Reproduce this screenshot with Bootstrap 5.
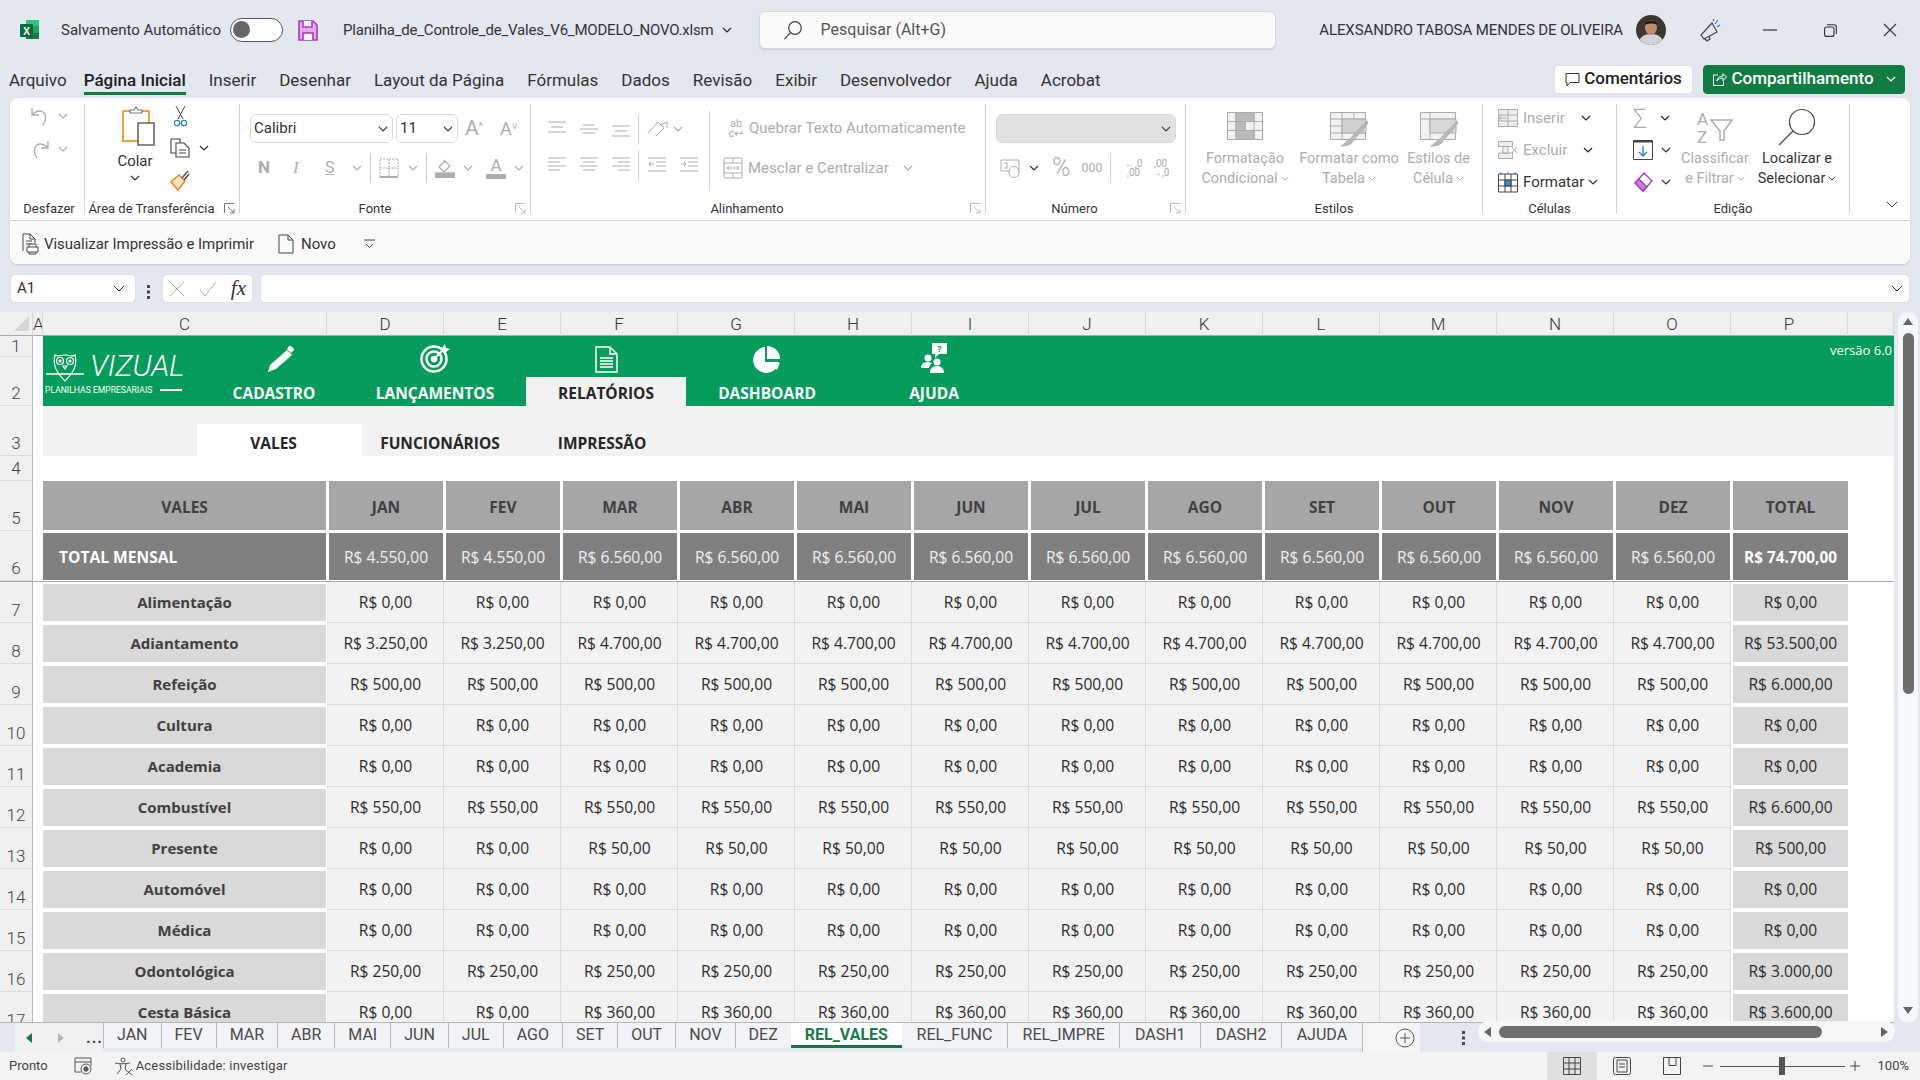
<!DOCTYPE html>
<html lang="pt-BR"><head><meta charset="utf-8"><title>Excel</title>
<link href="https://cdn.jsdelivr.net/npm/bootstrap@5.3.0/dist/css/bootstrap.min.css" rel="stylesheet">
<style>
html,body{height:100%;overflow:hidden}
body{background:#e3e7f0;font-family:Roboto,"Liberation Sans",sans-serif;color:#333;width:1920px;height:1080px}
svg{display:block;flex:none}
.cv{width:10px;height:6px;flex:none}
.dis{color:#adadad}
.titlebar{height:60px;font-size:15px}
.tb-xl{margin-left:20px}.tb-auto{margin-left:21px}
.toggle{width:53px;height:24px;margin-left:9px;border:1.5px solid #555;background:#fff;padding:2px}
.toggle i{width:17px;height:17px;background:#666;display:block}
.tb-save{margin-left:15px}.tb-file{margin-left:25px;font-size:15px;letter-spacing:-.2px}
.search{width:517px;height:38px;margin-left:27px;background:#fafafa;border:1px solid #d4d7de;font-size:16px;color:#555;padding:0 0 0 23px;gap:18px;box-shadow:0 1px 1px #c9ccd3;margin-top:-1px}
.user{margin-left:auto;font-size:15px;letter-spacing:-.1px}
.wbtn{width:60px;justify-content:center}
.tabrow{height:38px;padding-left:9px;font-size:17px;gap:23px}
.tabrow a{color:#333;text-decoration:none;padding:0;line-height:36px;margin-top:2px}
.tabrow a.on{font-weight:500;color:#1e1e1e;border-bottom:3px solid #107c41;line-height:40px;height:35px;margin:0 0 0 -6px;align-self:flex-start}
.btn-com,.btn-share{height:29px;font-size:17px;font-weight:500;padding:0;border-radius:4px}
.btn-com{width:139px;background:#fff;border:1px solid #dfe1e6;color:#222}
.btn-share{width:202px;background:#107c41;border:1px solid #107c41;color:#fff;margin:0 15px 0 10px}
.ribbon{height:166px;margin:0 10px;background:#fff;border-radius:8px;box-shadow:0 1px 2px #bfc3cb;overflow:hidden}
.rib-top{height:123px;padding-top:6px;border-bottom:1px solid #cfcfcf}
.g{flex:none;height:110px;border-right:1px solid #d2d2d2;position:relative;display:flex;flex-direction:column}
.g1{width:75px}.g2{width:155px}.g3{width:291px}.g4{width:455px}.g5{width:200px}.g6{width:297px}.g7{width:134px}.g8{width:233px}
.gb{height:92px;display:flex;flex:none}
.gl{height:18px;font-size:13px;color:#333;line-height:18px;text-align:center;white-space:nowrap;display:flex;justify-content:center;margin-top:4px}
.launch{position:absolute;right:4px;bottom:0;width:11px;height:11px;color:#777}
.stack{display:flex;flex-direction:column;gap:12px;padding-top:2px}
.stack>div{height:20px;display:flex;align-items:center}
.colar{width:70px;margin-left:15px;padding-top:2px;font-size:15px;line-height:20px}
.rows2{display:flex;flex-direction:column;padding-top:10px}
.r1{height:29px;display:flex;align-items:center}.r2{height:26px;margin-top:12px;display:flex;align-items:center}
.fs{height:29px;font-size:15px;padding:0 0 0 3px;border:1px solid #d9d9d9;border-radius:6px;background-position:right 4px center;background-size:10px 10px;color:#333}
.fs1{width:143px;margin-left:10px}.fs2{width:62px;margin-left:3px}
.fsd{width:180px;margin-left:10px;opacity:.5}
.form-select.fsd:disabled{background-color:#e2e2e2}
.vs{width:1px;height:30px;background:#d2d2d2;flex:none}
.ri{display:flex;flex:none}
.big{display:flex;flex-direction:column;align-items:center;padding-top:8px;font-size:14.5px;line-height:20px;white-space:nowrap;flex:none}
.big .txt{margin-top:9px;text-align:center}
.big .cv{display:inline-block;margin-left:3px;vertical-align:2px;width:8px;height:5px}
.st{font-size:15px;margin-left:5px;white-space:nowrap}
.qat{height:43px;background:#fafafa;font-size:15px;padding:3px 0 0 12px;color:#333}
.fbar{height:48px;padding-top:10px}
.fb-box{height:29px;background:#fff;border-radius:5px;border:1px solid #dde0e6}
.namebox{width:126px;margin-left:10px;font-size:15px;padding:0 10px 0 6px}
.fnbox{width:91px;padding:0 6px;margin-left:7px}
.finput{width:1650px;margin-left:7px;color:#444;padding-right:6px}
.mainrow{height:711px}
.sheetwrap{width:1894px;height:711px;overflow:hidden;background:#fff;border-bottom:1px solid #b5b5b5}
.sheet{width:1894px;table-layout:fixed;border-collapse:separate;border-spacing:0;margin:0;color:#333}
.sheet.table th,.sheet.table td{padding:0;border:0;background:transparent;box-shadow:none;text-align:center;vertical-align:middle;white-space:nowrap;line-height:20px;overflow:hidden;color:inherit}
.sheet col.cw0{width:33px}.sheet col.cw1{width:10px}.sheet col.cw2{width:284px}.sheet col.cw{width:117px}
.sheet.table thead th{height:24px;font-family:Roboto,sans-serif;font-weight:300;font-size:17px;color:#333;background:#f0f0f0;border-right:1px solid #d8d8d8;border-bottom:1px solid #aaa}
.sheet.table th.n{background:#f0f0f0;color:#444;font-family:Roboto,sans-serif;font-weight:300;font-size:17px;border-right:1px solid #b5b5b5;border-bottom:1px solid #dcdcdc;vertical-align:bottom;padding-bottom:2px}
.h21{height:21px}.h49{height:49px}.h50{height:50px}.h25{height:25px}.h41{height:41px}
.sheet.table th.n.t0{padding-bottom:0}
.sheet.table td.ban{background:#049c5a;color:#fff;vertical-align:top;text-align:left}
.ban-in{height:70px;display:flex;align-items:stretch}
.logo{width:151px;flex:none;color:#fff;padding:16px 0 0 3px}
.vz{font-style:italic;font-weight:300;font-size:30px;line-height:28px;margin-left:6px;letter-spacing:-.2px}
.pe{font-size:8.6px;line-height:10px;margin-top:3px;margin-left:-1px}
.mi{width:160px;flex:none;display:flex;flex-direction:column;align-items:center}
.mi .top{height:41px;display:flex;align-items:flex-end;padding-bottom:4px;flex:none}
.mi .lbl{height:29px;width:100%;text-align:center;font-family:"Open Sans",sans-serif;font-weight:700;font-size:15.5px;line-height:33px;flex:none}
.mi.act .lbl{background:#f2f2f2;color:#262626}
.mi2{margin-left:1px}.mi3{margin-left:11px}.mi4{margin-left:1px}.mi5{margin-left:7px}
.ver{margin-left:auto;font-family:"Open Sans",sans-serif;font-size:13px;padding:4px 2px 0 0}
.sheet.table td.band{background:#f2f2f2;vertical-align:bottom;text-align:left}
.band-in{height:50px;display:flex;align-items:flex-end;padding-left:154px;font-family:"Open Sans",sans-serif;font-weight:700;font-size:15.5px;color:#262626}
.band-in div{height:32px;line-height:38px;text-align:center;flex:none}
.b1{width:165px;background:#fff;padding-right:12px}.b2{width:156px}.b3{width:168px}
.sheet.table td.hd,.sheet.table td.tm,.sheet.table th.lb,.sheet.table td.tt,.sheet.table td.tb{border-left:2px solid #fff;border-right:1px solid #fff;border-top:2px solid #fff;border-bottom:1px solid #fff;background-clip:padding-box;font-family:"Open Sans",sans-serif}
.sheet.table td.hd{background:#a6a6a6;color:#404040;font-weight:700;font-size:15.5px;padding-top:3px;border-top:0}
.sheet.table td.tm{background:#808080;color:#f0f0f0;font-size:15.6px}
.sheet.table td.tb{background:#808080;color:#fff;font-weight:700;font-size:15.3px}
.sheet.table td.tml{text-align:left;padding-left:16px;color:#fff;font-weight:700;font-size:15.6px}
.sheet.table td.cl{border-left:0}
.sheet.table th.lb{background:#d9d9d9;color:#404040;font-weight:700;font-size:15px;border-left:0;border-top:2px solid #fff;border-bottom:2px solid #fff;padding-bottom:1px}
.sheet.table td.d{background:#f2f2f2;color:#2c2c2c;font-family:"Open Sans",sans-serif;font-size:15.6px;border-right:1px solid #dcdcdc;border-bottom:1px solid #dcdcdc;padding-left:1px}
.sheet.table td.tt{background:#d9d9d9;color:#2c2c2c;font-size:15.6px;border-bottom:2px solid #fff;padding-bottom:1px}
.sheet.table td.tt,.sheet.table td.tb,.sheet.table td.hd.tot{border-right:0}
.frz td{height:1px;background:#aaa!important;line-height:1px!important;font-size:0}
.corner{width:0;height:0;border-left:15px solid transparent;border-bottom:15px solid #d6d6d6;margin:0 0 0 14px}
.vscroll{width:26px;padding:0 2px 0 4px;height:711px}
.vs-in{height:100%;background:#f6f7f9;border-radius:10px;padding-top:21px;position:relative}
.thumbv{width:11px;height:361px;background:#6e6e6e;border-radius:6px;margin:0 auto}
.arr{position:absolute;left:5px;width:0;height:0;border-left:5px solid transparent;border-right:5px solid transparent}
.arr.up{top:6px;border-bottom:7px solid #666}.arr.dn{bottom:9px;border-top:7px solid #666}
.tabbar{height:29px;font-size:16px;color:#444}
.tb-left{margin-left:15px;width:88px;height:29px;background:#f1f1f3;padding-left:11px;gap:26px}
.sh{height:25px;line-height:24px;padding:0 13px;background:#f1f3f6;border-left:1.5px solid #b8b8b8;flex:none;color:#4a4a4a}
.sh.w{padding:0 14.6px}
.sh.on{background:#fff;color:#1b7a4b;font-weight:700;border-left:0;border-right:0;border-bottom:3px solid #1f7246;line-height:23px;padding:0 14px}
.sh.af{border-left:0}
.tb-add{width:58px;height:29px;background:#f5f5f5;border-left:1.5px solid #b8b8b8;justify-content:center;padding-left:28px}
.hs{width:417px;height:21px;margin-left:auto;margin-right:25px;background:#f6f7f9;border-radius:10px;padding:0 7px 0 6px;margin-top:-2px}
.thumbh{width:323px;height:12px;background:#6e6e6e;border-radius:6px;margin-left:8px}
.tri{width:0;height:0;border-top:5px solid transparent;border-bottom:5px solid transparent;flex:none}
.status{height:28px;background:#f3f3f3;font-size:13px;color:#444}
.v-on{width:50px;height:28px;background:#e0e0e0;justify-content:center}
.v-b{width:50px;height:28px;justify-content:center}
</style></head>
<body class="d-flex flex-column">
<svg width="0" height="0" class="position-absolute"><defs>
<symbol id="cv" viewBox="0 0 10 6"><path d="M1 1l4 4 4-4" fill="none" stroke="currentColor" stroke-width="1.2"/></symbol>
</defs></svg>

<header class="titlebar d-flex align-items-center">
<svg class="tb-xl" width="20" height="22" viewBox="0 0 20 22"><path fill="#33c481" d="M6 1h12a1 1 0 0 1 1 1v5H6z"/><path fill="#21a366" d="M6 7h13v7H6z"/><path fill="#107c41" d="M6 14h13v5a1 1 0 0 1-1 1H6z"/><rect y="5" width="13" height="13" rx="1" fill="#0e6b38"/><text x="6.5" y="15.5" text-anchor="middle" font-family="Liberation Sans" font-weight="700" font-size="10" fill="#fff">X</text></svg>
<span class="tb-auto">Salvamento Automático</span>
<div class="toggle rounded-pill"><i class="rounded-circle"></i></div>
<svg class="tb-save" width="20" height="21" viewBox="0 0 20 21"><path d="M1 1h14l4 4v15H1z" fill="#e7a7ec" stroke="#a63bb8" stroke-width="1.6"/><path d="M5 1v6h9V1M5 20v-7h10v7" fill="#fff" stroke="#a63bb8" stroke-width="1.6"/></svg>
<span class="tb-file">Planilha_de_Controle_de_Vales_V6_MODELO_NOVO.xlsm</span>
<svg class="cv ms-2 text-dark" viewBox="0 0 10 6"><use href="#cv"/></svg>
<div class="search rounded d-flex align-items-center"><svg width="20" height="20" viewBox="0 0 20 20" fill="none" stroke="#444" stroke-width="1.2"><circle cx="12" cy="8" r="6.3"/><path d="M7.6 12.6 1.5 19"/></svg><span>Pesquisar (Alt+G)</span></div>
<span class="user">ALEXSANDRO TABOSA MENDES DE OLIVEIRA</span>
<svg style="margin-left:13px" width="30" height="30" viewBox="0 0 30 30"><defs><clipPath id="av"><circle cx="15" cy="15" r="15"/></clipPath></defs><g clip-path="url(#av)"><rect width="30" height="30" fill="#3e352e"/><path d="M2 30c1-8 6-11 13-11s12 3 13 11z" fill="#cdd2dc"/><ellipse cx="15" cy="12.5" rx="6" ry="7.500" fill="#c08d6c"/><path d="M9 10c0-6 12-6 12 0-3-2-8-2-12 0z" fill="#1e1713"/></g></svg>
<svg style="margin-left:33px" width="22" height="24" viewBox="0 0 22 24" fill="none" stroke="#444" stroke-width="1.2"><path d="M13 5 2 17l3 4 13-7zM6 21l2 2 3-2-1-3"/><path d="M16 6l3-4M18 9l3-2M14 3l1-2" stroke="#2f7fc1"/></svg>
<div class="wbtn d-flex align-items-center" style="margin-left:19px"><svg width="14" height="2" viewBox="0 0 14 2"><path d="M0 1h14" stroke="#333" stroke-width="1.2"/></svg></div>
<div class="wbtn d-flex align-items-center"><svg width="13" height="13" viewBox="0 0 13 13" fill="none" stroke="#333" stroke-width="1.1"><rect x=".6" y="3" width="9.4" height="9.4" rx="2"/><path d="M3 .8h7a2.3 2.3 0 0 1 2.3 2.3v7"/></svg></div>
<div class="wbtn d-flex align-items-center"><svg width="14" height="14" viewBox="0 0 14 14" stroke="#333" stroke-width="1.1"><path d="M1 1l12 12M13 1 1 13"/></svg></div>
</header>

<nav class="tabrow nav align-items-center flex-nowrap">
<a href="#">Arquivo</a><a href="#" class="on">Página Inicial</a><a href="#">Inserir</a><a href="#">Desenhar</a><a href="#">Layout da Página</a><a href="#">Fórmulas</a><a href="#">Dados</a><a href="#">Revisão</a><a href="#">Exibir</a><a href="#">Desenvolvedor</a><a href="#">Ajuda</a><a href="#">Acrobat</a>
<div class="ms-auto d-flex">
<button class="btn btn-com d-flex align-items-center justify-content-center gap-1"><svg width="15" height="15" viewBox="0 0 15 15" fill="none" stroke="#333"><path d="M1 1.5h13v9H5L2 14v-3.500H1z"/></svg>Comentários</button>
<button class="btn btn-share d-flex align-items-center justify-content-center gap-1"><svg width="15" height="15" viewBox="0 0 15 15" fill="none" stroke="#fff"><path d="M6 3H1.500v10.500h10V9M5 9c0-3 3-5 6-5V1.500L14.500 5 11 8.500V6C8.500 6 6 7 5 9z"/></svg>Compartilhamento<svg class="cv ms-2" viewBox="0 0 10 6"><use href="#cv"/></svg></button>
</div>
</nav>

<section class="ribbon">
<div class="rib-top d-flex">
<div class="g g1"><div class="gb dis"><div class="stack" style="padding-left:20px;gap:13px;">
<div><svg width="20" height="20" viewBox="0 0 20 20" fill="none" stroke="currentColor" stroke-width="1.4"><path d="M2 2v7h7M2 9c3-4 8-5 11-3s4 8 0 13"/></svg><svg class="cv ms-2" viewBox="0 0 10 6"><use href="#cv"/></svg></div>
<div><svg width="20" height="20" viewBox="0 0 20 20" fill="none" stroke="currentColor" stroke-width="1.4"><path d="M18 2v7h-7M18 9c-3-4-8-5-11-3s-4 8 0 13"/></svg><svg class="cv ms-2" viewBox="0 0 10 6"><use href="#cv"/></svg></div>
</div></div><div class="gl" style="padding-left:4px">Desfazer</div></div>
<div class="g g2"><div class="gb">
<div class="colar d-flex flex-column align-items-center"><svg style="margin-left:6px" width="34" height="40" viewBox="0 0 34 40"><path d="M2 5h26v30H2z" fill="#fff" stroke="#e8a33d" stroke-width="2"/><path d="M9 7V4h4l2-3 2 3h4v3z" fill="#fff" stroke="#777" stroke-width="1.2"/><path d="M17 17h16v22H17z" fill="#fff" stroke="#666" stroke-width="1.600"/></svg><span style="margin-top:5px">Colar</span><svg class="cv mt-1" viewBox="0 0 10 6"><use href="#cv"/></svg></div>
<div class="stack"><div><svg class="ms-1" width="13" height="21" viewBox="0 0 13 21" fill="none" stroke="#444"><path d="M2 0l7 13M11 0 4 13"/><circle cx="3" cy="17" r="2.700" stroke="#2f7fc1" stroke-width="1.300"/><circle cx="10" cy="17" r="2.700" stroke="#2f7fc1" stroke-width="1.300"/></svg></div>
<div><svg width="20" height="20" viewBox="0 0 20 20" fill="#fff" stroke="#444" stroke-width="1.100"><path d="M1 1h9v14H1z"/><path d="M6 5h8l5 5v9H6z"/><path d="M9 12h7M9 15h7"/></svg><svg class="cv" style="margin-left:9px;color:#333" viewBox="0 0 10 6"><use href="#cv"/></svg></div>
<div><svg width="20" height="21" viewBox="0 0 20 21" fill="none" stroke-width="1.500"><path d="M1 12l8-7 6 6-7 9z" stroke="#e58a22" fill="#fbe3c4"/><path d="M12 8l6-7M14 10l5-6" stroke="#555"/></svg></div></div>
</div><div class="gl" style="padding-right:21px">Área de Transferência</div><svg class="launch" viewBox="0 0 11 11" fill="none" stroke="currentColor"><path d="M.5 10V.5H10M4 4l6 6M10 6v4H6"/></svg></div>
<div class="g g3"><div class="gb rows2">
<div class="r1"><select class="form-select fs fs1" aria-label="Fonte"><option>Calibri</option></select><select class="form-select fs fs2" aria-label="Tamanho"><option>11</option></select><span class="dis" style="font-size:21px;margin-left:7px;width:35px">A<sup style="font-size:10px">^</sup></span><span class="dis" style="font-size:18px">A<sup style="font-size:10px">˅</sup></span></div>
<div class="r2 dis"><span class="fw-bold" style="font-size:17px;margin-left:18px;width:35px">N</span><span class="fst-italic" style="font-size:17px;width:32px;font-family:'Liberation Serif'">I</span><span class="text-decoration-underline" style="font-size:16px;width:27px">S</span><svg class="cv" viewBox="0 0 10 6"><use href="#cv"/></svg><span class="vs mx-2"></span><svg width="20" height="20" viewBox="0 0 20 20" fill="none" stroke="currentColor"><path d="M1 1h18v18H1zM10 1v18M1 10h18" stroke-dasharray="2 1"/><path d="M1 19h18" stroke-width="2"/></svg><svg class="cv" style="margin-left:9px" viewBox="0 0 10 6"><use href="#cv"/></svg><span class="vs" style="margin:0 8px"></span><svg width="20" height="20" viewBox="0 0 20 20" fill="none" stroke="currentColor" stroke-width="1.200"><path d="M4 9l6-6 5 5-6 6z"/><path d="M9 2l1 3"/><rect y="15" width="20" height="5" fill="currentColor"/></svg><svg class="cv" style="margin-left:8px" viewBox="0 0 10 6"><use href="#cv"/></svg><span class="d-flex flex-column align-items-center" style="width:20px;margin-left:13px;font-size:17px;line-height:16px">A<i style="display:block;width:20px;height:5px;background:#adadad;margin-top:1px"></i></span><svg class="cv" style="margin-left:8px" viewBox="0 0 10 6"><use href="#cv"/></svg></div>
</div><div class="gl" style="padding-right:20px">Fonte</div><svg class="launch" viewBox="0 0 11 11" fill="none" stroke="#bbb"><path d="M.5 10V.5H10M4 4l6 6M10 6v4H6"/></svg></div>
<div class="g g4"><div class="gb dis"><div class="rows2" style="width:179px;border-right:1px solid #d2d2d2;height:78px;margin-top:7px;padding-top:3px;flex:none">
<div class="r1" style="padding-left:17px;gap:14px"><svg width="18" height="16" viewBox="0 0 18 16" stroke="currentColor"><path d="M0 1h18M3 6h12M0 11h18"/></svg><svg width="18" height="16" viewBox="0 0 18 16" stroke="currentColor"><path d="M3 4h12M0 8h18M3 12h12"/></svg><svg width="18" height="16" viewBox="0 0 18 16" stroke="currentColor"><path d="M0 5h18M3 10h12M0 15h18"/></svg><span class="vs" style="margin-left:-6px;height:30px"></span><svg style="margin-left:-7px" width="24" height="20" viewBox="0 0 24 20" fill="none" stroke="currentColor"><path d="M2 14 12 3l6 6-8 8M14 6l7-3M21 3v6"/></svg><svg class="cv" style="margin-left:-11px" viewBox="0 0 10 6"><use href="#cv"/></svg></div>
<div class="r2" style="padding-left:17px;gap:14px;margin-top:9px"><svg width="18" height="16" viewBox="0 0 18 16" stroke="currentColor"><path d="M0 1h18M0 5h12M0 9h18M0 13h12"/></svg><svg width="18" height="16" viewBox="0 0 18 16" stroke="currentColor"><path d="M0 1h18M3 5h12M0 9h18M3 13h12"/></svg><svg width="18" height="16" viewBox="0 0 18 16" stroke="currentColor"><path d="M0 1h18M6 5h12M0 9h18M6 13h12"/></svg><span class="vs" style="margin-left:-6px;height:30px"></span><svg style="margin-left:-5px" width="18" height="16" viewBox="0 0 18 16" fill="none" stroke="currentColor"><path d="M0 1h18M8 5h10M8 9h10M0 14h18M6 7H1M3 5 1 7l2 2"/></svg><svg width="18" height="16" viewBox="0 0 18 16" fill="none" stroke="currentColor"><path d="M0 1h18M8 5h10M8 9h10M0 14h18M1 7h5M4 5l2 2-2 2"/></svg></div>
</div><div class="rows2" style="padding-left:13px">
<div class="r1"><span class="ri" style="width:20px;margin-left:3px;font-size:11px;line-height:10px;text-align:center;flex-direction:column">ab<br>c↩</span><span class="st" style="margin-left:3px">Quebrar Texto Automaticamente</span></div>
<div class="r2"><svg width="20" height="22" viewBox="0 0 20 22" fill="none" stroke="currentColor"><path d="M1 1h18v20H1zM1 6h18M1 16h18M10 1v5M10 16v5M4 11h12M6 9l-2 2 2 2M14 9l2 2-2 2"/></svg><span class="st">Mesclar e Centralizar</span><svg class="cv" style="margin-left:14px" viewBox="0 0 10 6"><use href="#cv"/></svg></div>
</div></div><div class="gl" style="padding-right:22px">Alinhamento</div><svg class="launch" viewBox="0 0 11 11" fill="none" stroke="#bbb"><path d="M.5 10V.5H10M4 4l6 6M10 6v4H6"/></svg></div>
<div class="g g5"><div class="gb rows2 dis">
<div class="r1"><select class="form-select fs fsd" disabled aria-label="Formato"><option></option></select></div>
<div class="r2" style="padding-left:14px"><svg width="20" height="20" viewBox="0 0 20 20" fill="none" stroke="currentColor"><path d="M1 2h18v11H1z"/><ellipse cx="14" cy="14" rx="5" ry="5.500" fill="#fff"/><path d="M4 5h3v5H4"/></svg><svg class="cv" style="margin-left:9px;color:#333" viewBox="0 0 10 6"><use href="#cv"/></svg><span style="font-size:25px;margin-left:13px;line-height:26px;font-weight:300">%</span><span style="font-size:12.500px;margin-left:11px">000</span><span class="vs" style="margin:0 7px"></span><span style="font-size:10px;line-height:9px;width:32px;text-align:center">←,0<br>,00</span><span style="font-size:10px;line-height:9px;width:22px;text-align:center">,00<br>→,0</span></div>
</div><div class="gl" style="padding-right:22px">Número</div><svg class="launch" viewBox="0 0 11 11" fill="none" stroke="#bbb"><path d="M.5 10V.5H10M4 4l6 6M10 6v4H6"/></svg></div>
<div class="g g6"><div class="gb dis">
<div class="big" style="width:118px"><svg width="36" height="28" viewBox="0 0 36 28" fill="#f2f2f2" stroke="#aaa"><path d="M.5.5h35v27H.5z"/><path d="M.5 9.500h35M.5 18.500h35M9 .5v27M18 .5v27M27 .5v27"/><path d="M9 .5h18v9H9zM9 9.500h9v9H9zM9 18.500h18v9H9z" fill="#bbb"/></svg><div class="txt">Formatação<br>Condicional<svg class="cv" viewBox="0 0 10 6" style="display:inline"><use href="#cv"/></svg></div></div>
<div class="big" style="width:90px"><svg width="38" height="36" viewBox="0 0 38 36" fill="#f2f2f2" stroke="#aaa" style="margin-bottom:-8px"><path d="M.5.5h35v27H.5z"/><path d="M.5 7h35M.5 14h35M.5 21h35M12 .5v27M24 .5v27"/><path d="M12 7h24v14H12z" fill="#cfcfcf"/><path d="M37 9 20 27c-2 0-7 7-9 7 3 0 11-1 12-5L38 11z" fill="#bbb"/></svg><div class="txt">Formatar como<br>Tabela<svg class="cv" viewBox="0 0 10 6" style="display:inline"><use href="#cv"/></svg></div></div>
<div class="big" style="width:89px"><svg width="38" height="36" viewBox="0 0 38 36" fill="#f2f2f2" stroke="#aaa" style="margin-bottom:-8px"><path d="M.5.5h35v27H.5z"/><path d="M.5 7h35M10 .5v27"/><path d="M10 7h26v14H10z" fill="#d8d8d8"/><path d="M37 9 20 27c-2 0-7 7-9 7 3 0 11-1 12-5L38 11z" fill="#bbb"/></svg><div class="txt">Estilos de<br>Célula<svg class="cv" viewBox="0 0 10 6" style="display:inline"><use href="#cv"/></svg></div></div>
</div><div class="gl">Estilos</div></div>
<div class="g g7"><div class="gb"><div class="stack" style="padding:4px 0 0 15px">
<div class="dis"><svg width="20" height="18" viewBox="0 0 20 18" fill="#eee" stroke="currentColor"><path d="M.5.5h19v17H.5zM.5 6h19M.5 12h19M10 .5v17"/><path d="M8 9H1m3-3L1 9l3 3" fill="none"/></svg><span class="st">Inserir</span><svg class="cv text-dark" style="margin-left:16px" viewBox="0 0 10 6"><use href="#cv"/></svg></div>
<div class="dis"><svg width="20" height="18" viewBox="0 0 20 18" fill="#eee" stroke="currentColor"><path d="M.5.5h14v5h-14zM.5 12h14v5.500h-14zM5 5.500h5v7H5zM14 6l5 6M19 6l-5 6"/></svg><span class="st">Excluir</span><svg class="cv text-dark" style="margin-left:16px" viewBox="0 0 10 6"><use href="#cv"/></svg></div>
<div style="color:#333"><svg width="20" height="22" viewBox="0 0 20 22" fill="none" stroke="#444"><path d="M.5 3h19v18H.5zM.5 9h19M.5 15h19M7 3v18M13 3v18"/><path d="M7 9h6v6H7z" fill="#2f8fd6"/><path d="M3 1v3M10 1v3M17 1v3" stroke="#2f8fd6"/></svg><span class="st">Formatar</span><svg class="cv ms-1" viewBox="0 0 10 6"><use href="#cv"/></svg></div>
</div></div><div class="gl">Células</div></div>
<div class="g g8"><div class="gb">
<div class="stack" style="width:63px;padding-left:16px;flex:none;padding-top:4px">
<div class="dis"><span style="font-size:23px;width:19px;line-height:20px;font-weight:300">∑</span><svg class="cv ms-2 text-dark" viewBox="0 0 10 6"><use href="#cv"/></svg></div>
<div><svg width="20" height="20" viewBox="0 0 20 20" fill="#fff" stroke="#444"><path d="M.5.5h19v19H.5z"/><path d="M.5 1.500h19" stroke-width="2"/><path d="M10 6v10M6 12l4 4 4-4" stroke="#2f7fc1" stroke-width="1.300" fill="none"/></svg><svg class="cv ms-2" viewBox="0 0 10 6"><use href="#cv"/></svg></div>
<div><svg width="20" height="20" viewBox="0 0 20 20" stroke="#a63bb8" stroke-width="1.300"><path d="M11 1l8 8-9 10-8-8z" fill="#fff"/><path d="M6 7l8 8-4 4-8-8z" fill="#c77ad6"/></svg><svg class="cv ms-2" viewBox="0 0 10 6"><use href="#cv"/></svg></div></div>
<div class="big dis" style="width:70px;padding-top:6px"><svg width="36" height="36" viewBox="0 0 36 36" fill="none" stroke="#adadad"><text x="0" y="15" font-size="17" font-family="Roboto" fill="#adadad" stroke="none">A</text><text x="0" y="33" font-size="17" font-family="Roboto" fill="#adadad" stroke="none">Z</text><path d="M14 10h21l-8 11v9h-4v-9z" stroke-width="1.500"/></svg><div class="txt" style="margin-top:3px">Classificar<br>e Filtrar<svg class="cv" viewBox="0 0 10 6" style="display:inline"><use href="#cv"/></svg></div></div>
<div class="big" style="width:94px;padding-top:4px;color:#333"><svg width="38" height="38" viewBox="0 0 38 38" fill="none" stroke="#444" stroke-width="1.200"><circle cx="24" cy="14" r="12.500"/><path d="M15 23 1 37"/></svg><div class="txt" style="margin-top:3px">Localizar e<br>Selecionar<svg class="cv" viewBox="0 0 10 6" style="display:inline"><use href="#cv"/></svg></div></div>
</div><div class="gl">Edição</div></div>
<div class="flex-grow-1 d-flex align-items-end justify-content-end" style="height:106px;padding:0 12px 0 0"><svg width="12" height="7" viewBox="0 0 12 7" fill="none" stroke="#333" style="margin-bottom:2px"><path d="M1 1l5 5 5-5"/></svg></div>
</div>
<div class="qat d-flex align-items-center">
<svg width="17" height="22" viewBox="0 0 17 22" fill="none" stroke="#444"><path d="M1 18V1h7l5 5v4M8 1v5h5M4 8h6M4 11h6"/><path d="M5 14h11v5H5zM7 14v-3h7v3M7 19v2h7v-2" fill="#fff"/></svg>
<span style="margin-left:5px;letter-spacing:-.05px">Visualizar Impressão e Imprimir</span>
<svg style="margin-left:24px" width="16" height="20" viewBox="0 0 16 20" fill="none" stroke="#444"><path d="M1 19V1h9l5 5v13zM10 1v5h5"/></svg>
<span style="margin-left:7px">Novo</span>
<svg style="margin-left:28px" width="11" height="10" viewBox="0 0 11 10" fill="none" stroke="#444"><path d="M0 1h11M2 5l3.500 3.500L9 5"/></svg>
</div>
</section>

<div class="fbar d-flex">
<div class="fb-box namebox d-flex align-items-center justify-content-between"><span>A1</span><svg width="12" height="7" viewBox="0 0 12 7" fill="none" stroke="#333"><path d="M1 1l5 5 5-5"/></svg></div>
<svg class="align-self-center" style="margin-left:11px;margin-top:-2px" width="3" height="14" viewBox="0 0 3 14" fill="#444"><rect width="3" height="3"/><rect y="5.500" width="3" height="3"/><rect y="11" width="3" height="3"/></svg>
<div class="fb-box fnbox d-flex align-items-center justify-content-between" style="margin-left:12px"><svg width="16" height="16" viewBox="0 0 16 16" stroke="#aaa"><path d="M1 1l14 14M15 1 1 15"/></svg><svg width="18" height="16" viewBox="0 0 18 16" fill="none" stroke="#aaa"><path d="M1 9l5 6L17 1"/></svg><i style="font-family:'Liberation Serif',serif;font-size:21px;color:#333">fx</i></div>
<div class="fb-box finput d-flex align-items-center justify-content-end"><svg width="12" height="7" viewBox="0 0 12 7" fill="none" stroke="#333"><path d="M1 1l5 5 5-5"/></svg></div>
</div>

<main class="mainrow d-flex">
<div class="sheetwrap">
<table class="table sheet">
<colgroup><col class="cw0"><col class="cw1"><col class="cw2"><col class="cw" span="13"><col></colgroup>
<thead><tr><th><div class="corner"></div></th><th>A</th><th>C</th><th>D</th><th>E</th><th>F</th><th>G</th><th>H</th><th>I</th><th>J</th><th>K</th><th>L</th><th>M</th><th>N</th><th>O</th><th>P</th><th></th></tr></thead>
<tbody>
<tr class="h21"><th class="n t0">1</th><td></td>
<td class="ban" colspan="15" rowspan="2"><div class="ban-in">
<div class="logo"><div class="d-flex"><svg width="38" height="30" viewBox="0 0 38 30" fill="none" stroke="#fff" stroke-width="1.200"><path d="M0 22h38" stroke-width="1.500"/><path d="M9 3c3 2 6-0 10 0s7 2 10 0c1 4 1 8 0 11-1 6-6 11-10 15-4-4-9-9-10-15-1-3-1-7 0-11z"/><circle cx="14" cy="9" r="3.500"/><circle cx="24" cy="9" r="3.500"/><circle cx="14" cy="9" r="1"/><circle cx="24" cy="9" r="1"/><path d="M17 14h4l-2 3z"/></svg><span class="vz">VIZUAL</span></div>
<div class="pe d-flex align-items-center">PLANILHAS EMPRESARIAIS<i class="ms-2 bg-white" style="display:block;width:22px;height:1.500px"></i></div></div>
<div class="mi"><div class="top"><svg style="margin-left:12px" width="28" height="28" viewBox="0 0 28 28" fill="#fff"><path d="M21 5l5 5L10 24l-8 3 2-7z"/><path d="M23 1l-2 3 4 4 3-3c0-2-3-4-5-4z"/></svg></div><div class="lbl">CADASTRO</div></div>
<div class="mi mi2"><div class="top"><svg width="31" height="29" viewBox="0 0 31 29" fill="none" stroke="#fff"><circle cx="14" cy="15" r="12.500" stroke-width="2.500"/><circle cx="14" cy="15" r="7.500" stroke-width="2.500"/><circle cx="14" cy="15" r="3" fill="#fff"/><path d="M14 15 25 4" stroke-width="2"/><path d="M22 4l3-4 1 4 4 1-4 3h-4z" fill="#fff" stroke="none"/></svg></div><div class="lbl">LANÇAMENTOS</div></div>
<div class="mi mi3 act"><div class="top"><svg width="23" height="27" viewBox="0 0 23 27" fill="none" stroke="#fff" stroke-width="1.500"><path d="M1 1h14l7 7v18H1z"/><path d="M15 1v7h7M5 12h13M5 15h13M5 18h13M5 21h13" /></svg></div><div class="lbl">RELATÓRIOS</div></div>
<div class="mi mi4"><div class="top"><svg width="28" height="27" viewBox="0 0 28 27" fill="#fff"><path d="M12 1A13 13 0 1 0 26 16H12z"/><path d="M14 0a13 13 0 0 1 13 13H14z"/><path d="M17 17h10l-3 7z" /></svg></div><div class="lbl">DASHBOARD</div></div>
<div class="mi mi5"><div class="top"><svg width="27" height="30" viewBox="0 0 27 30" fill="#fff"><path d="M11 0h15v11h-8l-4 4v-4h-3z"/><circle cx="7" cy="15" r="3.500"/><circle cx="16" cy="19" r="3.500"/><path d="M0 25c0-4 3-6 7-6 2 0 3 1 4 1-1 1-3 3-3 5zM9 30c0-5 3-7 7-7s7 2 7 7z"/><text x="18.500" y="9" text-anchor="middle" font-size="9" font-weight="700" font-family="Open Sans" fill="#049c5a">?</text></svg></div><div class="lbl">AJUDA</div></div>
<div class="ver">versão 6.0</div>
</div></td></tr>
<tr class="h49"><th class="n">2</th><td></td></tr>
<tr class="h50"><th class="n">3</th><td></td><td class="band" colspan="15"><div class="band-in"><div class="b1">VALES</div><div class="b2">FUNCIONÁRIOS</div><div class="b3">IMPRESSÃO</div></div></td></tr>
<tr class="h25"><th class="n">4</th><td colspan="16"></td></tr>
<tr class="h50"><th class="n">5</th><td></td><td class="hd cl">VALES</td><td class="hd">JAN</td><td class="hd">FEV</td><td class="hd">MAR</td><td class="hd">ABR</td><td class="hd">MAI</td><td class="hd">JUN</td><td class="hd">JUL</td><td class="hd">AGO</td><td class="hd">SET</td><td class="hd">OUT</td><td class="hd">NOV</td><td class="hd">DEZ</td><td class="hd tot">TOTAL</td><td></td></tr>
<tr class="h50"><th class="n">6</th><td></td><td class="tm tml cl">TOTAL MENSAL</td><td class="tm">R$ 4.550,00</td><td class="tm">R$ 4.550,00</td><td class="tm">R$ 6.560,00</td><td class="tm">R$ 6.560,00</td><td class="tm">R$ 6.560,00</td><td class="tm">R$ 6.560,00</td><td class="tm">R$ 6.560,00</td><td class="tm">R$ 6.560,00</td><td class="tm">R$ 6.560,00</td><td class="tm">R$ 6.560,00</td><td class="tm">R$ 6.560,00</td><td class="tm">R$ 6.560,00</td><td class="tb">R$ 74.700,00</td><td></td></tr>
<tr class="frz"><td colspan="17"></td></tr>
<tr class="h41"><th class="n">7</th><td></td><th class="lb">Alimentação</th><td class="d">R$ 0,00</td><td class="d">R$ 0,00</td><td class="d">R$ 0,00</td><td class="d">R$ 0,00</td><td class="d">R$ 0,00</td><td class="d">R$ 0,00</td><td class="d">R$ 0,00</td><td class="d">R$ 0,00</td><td class="d">R$ 0,00</td><td class="d">R$ 0,00</td><td class="d">R$ 0,00</td><td class="d">R$ 0,00</td><td class="tt">R$ 0,00</td><td></td></tr>
<tr class="h41"><th class="n">8</th><td></td><th class="lb">Adiantamento</th><td class="d">R$ 3.250,00</td><td class="d">R$ 3.250,00</td><td class="d">R$ 4.700,00</td><td class="d">R$ 4.700,00</td><td class="d">R$ 4.700,00</td><td class="d">R$ 4.700,00</td><td class="d">R$ 4.700,00</td><td class="d">R$ 4.700,00</td><td class="d">R$ 4.700,00</td><td class="d">R$ 4.700,00</td><td class="d">R$ 4.700,00</td><td class="d">R$ 4.700,00</td><td class="tt">R$ 53.500,00</td><td></td></tr>
<tr class="h41"><th class="n">9</th><td></td><th class="lb">Refeição</th><td class="d">R$ 500,00</td><td class="d">R$ 500,00</td><td class="d">R$ 500,00</td><td class="d">R$ 500,00</td><td class="d">R$ 500,00</td><td class="d">R$ 500,00</td><td class="d">R$ 500,00</td><td class="d">R$ 500,00</td><td class="d">R$ 500,00</td><td class="d">R$ 500,00</td><td class="d">R$ 500,00</td><td class="d">R$ 500,00</td><td class="tt">R$ 6.000,00</td><td></td></tr>
<tr class="h41"><th class="n">10</th><td></td><th class="lb">Cultura</th><td class="d">R$ 0,00</td><td class="d">R$ 0,00</td><td class="d">R$ 0,00</td><td class="d">R$ 0,00</td><td class="d">R$ 0,00</td><td class="d">R$ 0,00</td><td class="d">R$ 0,00</td><td class="d">R$ 0,00</td><td class="d">R$ 0,00</td><td class="d">R$ 0,00</td><td class="d">R$ 0,00</td><td class="d">R$ 0,00</td><td class="tt">R$ 0,00</td><td></td></tr>
<tr class="h41"><th class="n">11</th><td></td><th class="lb">Academia</th><td class="d">R$ 0,00</td><td class="d">R$ 0,00</td><td class="d">R$ 0,00</td><td class="d">R$ 0,00</td><td class="d">R$ 0,00</td><td class="d">R$ 0,00</td><td class="d">R$ 0,00</td><td class="d">R$ 0,00</td><td class="d">R$ 0,00</td><td class="d">R$ 0,00</td><td class="d">R$ 0,00</td><td class="d">R$ 0,00</td><td class="tt">R$ 0,00</td><td></td></tr>
<tr class="h41"><th class="n">12</th><td></td><th class="lb">Combustível</th><td class="d">R$ 550,00</td><td class="d">R$ 550,00</td><td class="d">R$ 550,00</td><td class="d">R$ 550,00</td><td class="d">R$ 550,00</td><td class="d">R$ 550,00</td><td class="d">R$ 550,00</td><td class="d">R$ 550,00</td><td class="d">R$ 550,00</td><td class="d">R$ 550,00</td><td class="d">R$ 550,00</td><td class="d">R$ 550,00</td><td class="tt">R$ 6.600,00</td><td></td></tr>
<tr class="h41"><th class="n">13</th><td></td><th class="lb">Presente</th><td class="d">R$ 0,00</td><td class="d">R$ 0,00</td><td class="d">R$ 50,00</td><td class="d">R$ 50,00</td><td class="d">R$ 50,00</td><td class="d">R$ 50,00</td><td class="d">R$ 50,00</td><td class="d">R$ 50,00</td><td class="d">R$ 50,00</td><td class="d">R$ 50,00</td><td class="d">R$ 50,00</td><td class="d">R$ 50,00</td><td class="tt">R$ 500,00</td><td></td></tr>
<tr class="h41"><th class="n">14</th><td></td><th class="lb">Automóvel</th><td class="d">R$ 0,00</td><td class="d">R$ 0,00</td><td class="d">R$ 0,00</td><td class="d">R$ 0,00</td><td class="d">R$ 0,00</td><td class="d">R$ 0,00</td><td class="d">R$ 0,00</td><td class="d">R$ 0,00</td><td class="d">R$ 0,00</td><td class="d">R$ 0,00</td><td class="d">R$ 0,00</td><td class="d">R$ 0,00</td><td class="tt">R$ 0,00</td><td></td></tr>
<tr class="h41"><th class="n">15</th><td></td><th class="lb">Médica</th><td class="d">R$ 0,00</td><td class="d">R$ 0,00</td><td class="d">R$ 0,00</td><td class="d">R$ 0,00</td><td class="d">R$ 0,00</td><td class="d">R$ 0,00</td><td class="d">R$ 0,00</td><td class="d">R$ 0,00</td><td class="d">R$ 0,00</td><td class="d">R$ 0,00</td><td class="d">R$ 0,00</td><td class="d">R$ 0,00</td><td class="tt">R$ 0,00</td><td></td></tr>
<tr class="h41"><th class="n">16</th><td></td><th class="lb">Odontológica</th><td class="d">R$ 250,00</td><td class="d">R$ 250,00</td><td class="d">R$ 250,00</td><td class="d">R$ 250,00</td><td class="d">R$ 250,00</td><td class="d">R$ 250,00</td><td class="d">R$ 250,00</td><td class="d">R$ 250,00</td><td class="d">R$ 250,00</td><td class="d">R$ 250,00</td><td class="d">R$ 250,00</td><td class="d">R$ 250,00</td><td class="tt">R$ 3.000,00</td><td></td></tr>
<tr class="h41"><th class="n">17</th><td></td><th class="lb">Cesta Básica</th><td class="d">R$ 0,00</td><td class="d">R$ 0,00</td><td class="d">R$ 360,00</td><td class="d">R$ 360,00</td><td class="d">R$ 360,00</td><td class="d">R$ 360,00</td><td class="d">R$ 360,00</td><td class="d">R$ 360,00</td><td class="d">R$ 360,00</td><td class="d">R$ 360,00</td><td class="d">R$ 360,00</td><td class="d">R$ 360,00</td><td class="tt">R$ 3.600,00</td><td></td></tr>
</tbody></table>
</div>
<div class="vscroll"><div class="vs-in"><span class="arr up"></span><div class="thumbv"></div><span class="arr dn"></span></div></div>
</main>

<div class="tabbar d-flex align-items-start">
<div class="tb-left d-flex align-items-center"><span class="tri" style="border-right:6px solid #1f7246"></span><span class="tri" style="border-left:6px solid #b5b5b5"></span><span class="fw-bold" style="letter-spacing:1px;margin-left:-4px">...</span></div>
<div class="sh">JAN</div><div class="sh">FEV</div><div class="sh">MAR</div><div class="sh">ABR</div><div class="sh">MAI</div><div class="sh">JUN</div><div class="sh">JUL</div><div class="sh">AGO</div><div class="sh">SET</div><div class="sh">OUT</div><div class="sh">NOV</div><div class="sh">DEZ</div><div class="sh on">REL_VALES</div><div class="sh w af">REL_FUNC</div><div class="sh w">REL_IMPRE</div><div class="sh w">DASH1</div><div class="sh w">DASH2</div><div class="sh w">AJUDA</div>
<div class="tb-add d-flex align-items-center"><svg width="20" height="20" viewBox="0 0 20 20" fill="none" stroke="#555"><circle cx="10" cy="10" r="9"/><path d="M10 5v10M5 10h10"/></svg></div>
<svg class="align-self-center" style="margin-left:42px" width="3" height="14" viewBox="0 0 3 14" fill="#444"><rect width="3" height="3"/><rect y="5.500" width="3" height="3"/><rect y="11" width="3" height="3"/></svg>
<div class="hs d-flex align-items-center"><span class="tri" style="border-right:7px solid #666"></span><div class="thumbh"></div><span class="tri ms-auto" style="border-left:7px solid #666"></span></div>
</div>

<footer class="status d-flex align-items-center">
<span style="margin-left:9px">Pronto</span>
<svg style="margin-left:26px" width="18" height="18" viewBox="0 0 18 18" fill="none" stroke="#555"><path d="M1 1h16v8M1 5h16M1 1v14h6"/><circle cx="12" cy="12" r="5" fill="#f3f3f3"/><circle cx="12" cy="12" r="2.200" fill="#555"/></svg>
<svg style="margin-left:22px" width="19" height="19" viewBox="0 0 19 19" fill="none" stroke="#555"><circle cx="9" cy="3" r="2"/><path d="M1 6c4 1 10 1 15 0M6 7l1 5-4 5M12 7l-1 5 1 1M11 12l7 6M18 12l-6 6"/></svg>
<span style="margin-left:3px;letter-spacing:.2px">Acessibilidade: investigar</span>
<div class="ms-auto d-flex align-items-center" style="margin-right:11px">
<div class="v-on d-flex align-items-center"><svg width="18" height="18" viewBox="0 0 18 18" fill="none" stroke="#444"><path d="M.5.5h17v17H.5zM6 .5v17M12 .5v17M.5 6h17M.5 12h17"/></svg></div>
<div class="v-b d-flex align-items-center"><svg width="18" height="18" viewBox="0 0 18 18" fill="none" stroke="#444"><rect x=".5" y=".5" width="17" height="17" rx="2"/><path d="M4 3h10v12H4zM6 7h6M6 10h6"/></svg></div>
<div class="v-b d-flex align-items-center"><svg width="18" height="18" viewBox="0 0 18 18" fill="none" stroke="#444"><path d="M.5.5h17v17H.5M.5.500v17M6 .5v8h7v-8"/></svg></div>
<svg style="margin-left:6px" width="10" height="2" viewBox="0 0 10 2"><path d="M0 1h10" stroke="#444"/></svg>
<div class="d-flex align-items-center justify-content-center" style="width:125px;height:1px;background:#555;margin-left:7px"><i style="display:block;width:6px;height:18px;background:#555"></i></div>
<svg style="margin-left:5px" width="10" height="10" viewBox="0 0 10 10"><path d="M0 5h10M5 0v10" stroke="#444"/></svg>
<span style="margin-left:18px">100%</span>
</div>
</footer>
</body></html>
